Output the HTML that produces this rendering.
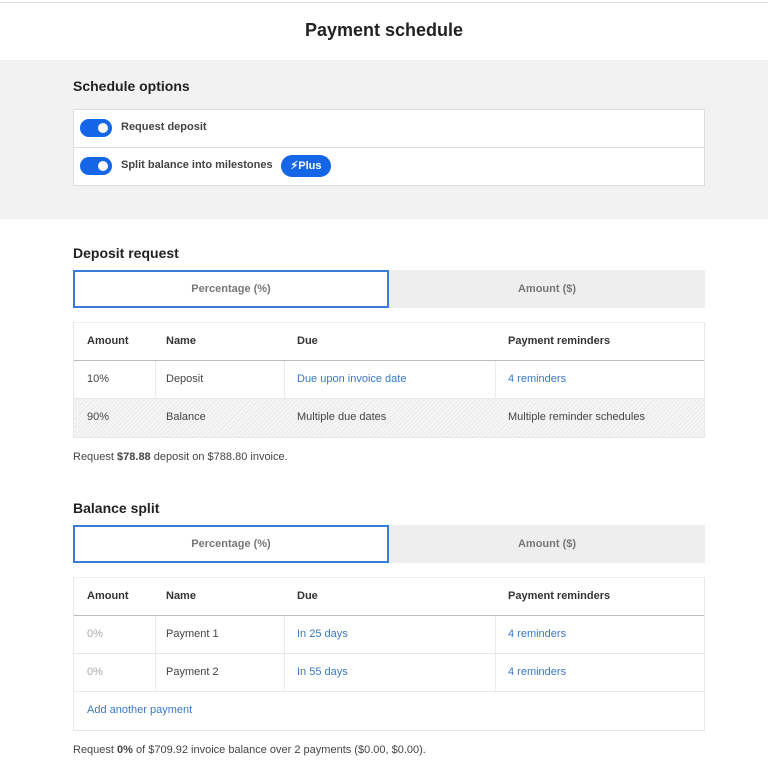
<!DOCTYPE html>
<html><head><style>
*{margin:0;padding:0;box-sizing:border-box}
body{width:768px;height:768px;background:#fff;font-family:"Liberation Sans",sans-serif;position:relative;overflow:hidden;color:#333}
.a{position:absolute}
.t{font-size:11px;color:#444;white-space:nowrap}
.b{color:#3a78c4}
.h{font-weight:bold;font-size:14px;color:#222}
.tab{position:absolute;height:38px;font-size:11px;color:#777;display:flex;align-items:center;justify-content:center;font-weight:bold}
.tbl{position:absolute;left:73px;width:632px;border:1px solid #e8e8e8;border-top:1px solid #eee}
.row{position:relative;height:38px;border-bottom:1px solid #e8e8e8}
.row span{position:absolute;top:12px;font-size:11px;color:#444;white-space:nowrap}
.hd{border-bottom:1px solid #bbb}
.hd span{font-weight:bold;color:#333}
.c2,.c3,.c4{position:absolute;top:0;bottom:0;border-left:1px solid #ececec}
.tog{position:absolute;left:80px;width:32px;height:18px;border-radius:9px;background:#1466e6}
.tog:after{content:"";position:absolute;right:4px;top:4px;width:10px;height:10px;border-radius:50%;background:#fff}
.stripe{background:repeating-linear-gradient(135deg,#f6f6f6 0 2px,#e9e9e9 2px 3px)}
</style></head><body>
<div class="a" style="left:0;top:2px;width:768px;height:1px;background:#ddd"></div>
<div class="a" style="left:0;top:20px;width:768px;text-align:center;font-size:18px;font-weight:bold;color:#222">Payment schedule</div>
<div class="a" style="left:0;top:60px;width:768px;height:159px;background:#f2f2f2"></div>
<div class="a h" style="left:73px;top:78px">Schedule options</div>
<div class="a" style="left:73px;top:109px;width:632px;height:77px;background:#fff;border:1px solid #ddd"></div>
<div class="a" style="left:74px;top:147px;width:630px;height:1px;background:#ddd"></div>
<div class="tog" style="top:119px"></div>
<div class="a t" style="left:121px;top:121px;font-weight:bold">Request deposit</div>
<div class="tog" style="top:157px"></div>
<div class="a t" style="left:121px;top:159px;font-weight:bold">Split balance into milestones</div>
<div class="a" style="left:281px;top:155px;width:50px;height:22px;border-radius:11px;background:#1466e6;color:#fff;font-size:11px;font-weight:bold;text-align:center;line-height:22px">&#x26A1;&#xFE0E;Plus</div>

<div class="a h" style="left:73px;top:245px">Deposit request</div>
<div class="tab" style="left:389px;top:270px;width:316px;background:#eeeeee">Amount ($)</div>
<div class="tab" style="left:73px;top:270px;width:316px;border:2px solid #3a7bd5;background:#fff">Percentage (%)</div>
<div class="tbl" style="top:322px">
 <div class="row hd"><span style="left:13px">Amount</span><span style="left:92px">Name</span><span style="left:223px">Due</span><span style="left:434px">Payment reminders</span></div>
 <div class="row"><div class="c2" style="left:81px"></div><div class="c3" style="left:210px"></div><div class="c4" style="left:421px"></div><span style="left:13px">10%</span><span style="left:92px">Deposit</span><span class="b" style="left:223px;color:#3a78c4">Due upon invoice date</span><span style="left:434px;color:#3a78c4">4 reminders</span></div>
 <div class="row stripe" style="border-bottom:none"><span style="left:13px">90%</span><span style="left:92px">Balance</span><span style="left:223px">Multiple due dates</span><span style="left:434px">Multiple reminder schedules</span></div>
</div>
<div class="a t" style="left:73px;top:451px">Request <b>$78.88</b> deposit on $788.80 invoice.</div>

<div class="a h" style="left:73px;top:500px">Balance split</div>
<div class="tab" style="left:389px;top:525px;width:316px;background:#eeeeee">Amount ($)</div>
<div class="tab" style="left:73px;top:525px;width:316px;border:2px solid #3a7bd5;background:#fff">Percentage (%)</div>
<div class="tbl" style="top:577px">
 <div class="row hd"><span style="left:13px">Amount</span><span style="left:92px">Name</span><span style="left:223px">Due</span><span style="left:434px">Payment reminders</span></div>
 <div class="row"><div class="c2" style="left:81px"></div><div class="c3" style="left:210px"></div><div class="c4" style="left:421px"></div><span style="left:13px;color:#aaa">0%</span><span style="left:92px">Payment 1</span><span style="left:223px;color:#3a78c4">In 25 days</span><span style="left:434px;color:#3a78c4">4 reminders</span></div>
 <div class="row"><div class="c2" style="left:81px"></div><div class="c3" style="left:210px"></div><div class="c4" style="left:421px"></div><span style="left:13px;color:#aaa">0%</span><span style="left:92px">Payment 2</span><span style="left:223px;color:#3a78c4">In 55 days</span><span style="left:434px;color:#3a78c4">4 reminders</span></div>
 <div class="row" style="border-bottom:none"><span style="left:13px;color:#3a78c4">Add another payment</span></div>
</div>
<div class="a t" style="left:73px;top:744px">Request <b>0%</b> of $709.92 invoice balance over 2 payments ($0.00, $0.00).</div>
</body></html>
